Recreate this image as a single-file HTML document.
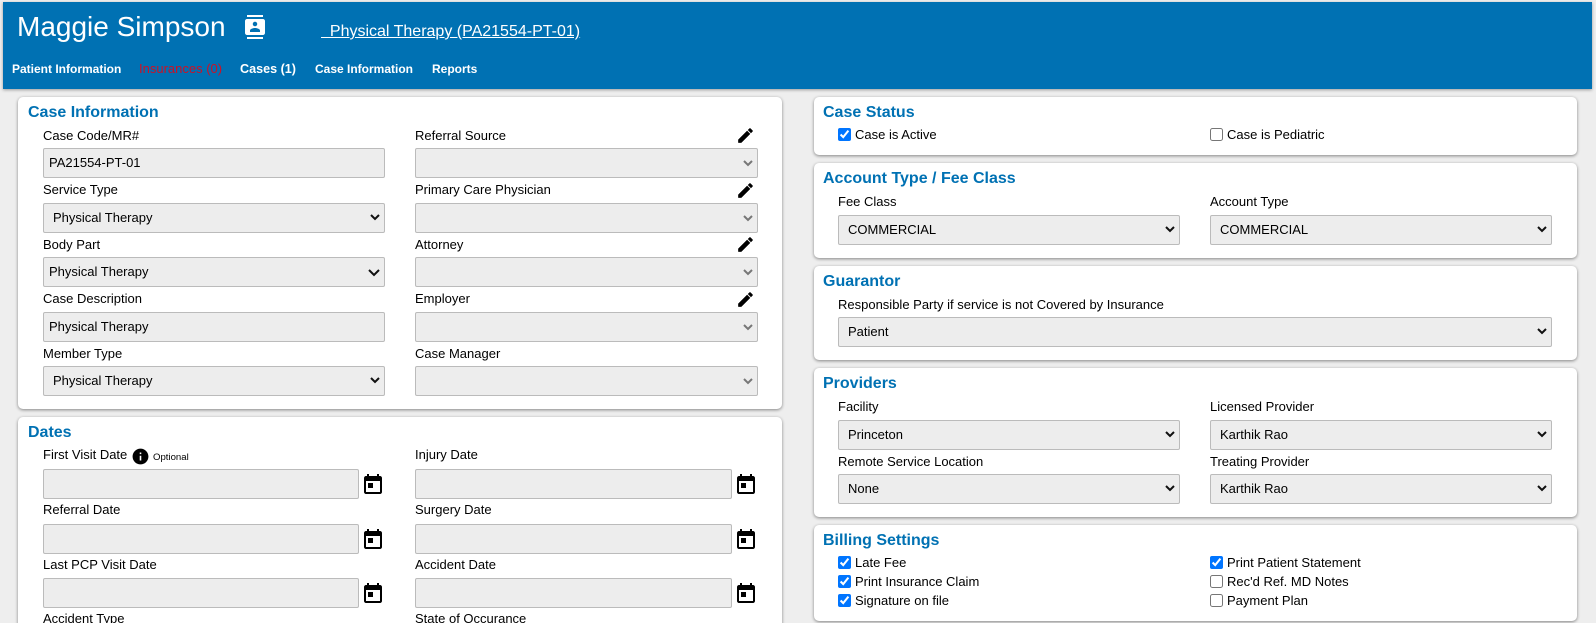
<!DOCTYPE html>
<html><head><meta charset="utf-8"><style>
html,body{margin:0;padding:0;width:1596px;height:623px;overflow:hidden;background:#eee;font-family:"Liberation Sans",Arial,sans-serif;color:#111}
*{box-sizing:border-box}
#root{position:relative;width:1596px;height:623px;overflow:hidden;background:#eee}
.a{position:absolute}
#hd{position:absolute;left:3px;top:2px;width:1589px;height:87px;background:#0071b3;box-shadow:0 1px 3px rgba(0,0,0,.35)}
.nav{position:absolute;top:60px;font-size:12px;font-weight:bold;color:#fff;line-height:18px;white-space:nowrap}
.card{position:absolute;background:#fff;border-radius:5px;box-shadow:0 1px 3px rgba(0,0,0,.45)}
.t{position:absolute;font-size:16px;font-weight:bold;color:#0071b3;line-height:20px;white-space:nowrap}
.l{position:absolute;font-size:13px;line-height:16px;white-space:nowrap;color:#000}
.i,select{position:absolute;height:30px;background:#ededed;border:1px solid #bbb;border-radius:2px;font:13px "Liberation Sans",Arial,sans-serif;color:#000;line-height:28px;padding:0 5px;margin:0;white-space:nowrap}
select{width:343px;padding-left:9px;-webkit-appearance:none;appearance:none}
select:disabled{opacity:1;color:#777}
input[type=checkbox]{position:absolute;width:13px;height:13px;margin:0;accent-color:#0075ff}
svg{position:absolute;fill:#000}
svg.e{stroke:#000;stroke-width:.5}
svg.c{fill:none;stroke:#111;stroke-width:2;pointer-events:none}
svg.d{fill:none;stroke:#777;stroke-width:2;pointer-events:none}
</style></head><body><div id="root">
<div id="hd"></div>
<div class="a" style="left:17px;top:10px;font-size:28px;line-height:34px;color:#fff;white-space:nowrap">Maggie Simpson</div>
<svg style="left:243px;top:15px;fill:#fff" width="24" height="24" viewBox="0 0 24 24"><path d="M20 0H4v2h16V0zM4 24h16v-2H4v2zM20 4H4c-1.1 0-2 .9-2 2v12c0 1.1.9 2 2 2h16c1.1 0 2-.9 2-2V6c0-1.1-.9-2-2-2zm-8 2.75c1.24 0 2.25 1.01 2.25 2.25s-1.01 2.25-2.25 2.25S9.75 10.24 9.75 9 10.76 6.75 12 6.75zM17 17H7v-1.5c0-1.67 3.33-2.5 5-2.5s5 .83 5 2.5V17z"/></svg>
<div class="a" style="left:321px;top:23px;font-size:16px;line-height:18px;color:#fff;text-decoration:underline;white-space:pre">  Physical Therapy (PA21554-PT-01)</div>
<div class="nav" style="left:12px">Patient Information</div>
<div class="nav" style="left:139px;color:#cc1126;font-weight:normal;font-size:13px">Insurances (0)</div>
<div class="nav" style="left:240px;font-size:12.6px">Cases (1)</div>
<div class="nav" style="left:315px">Case Information</div>
<div class="nav" style="left:432px">Reports</div>

<div class="card" style="left:18px;top:97px;width:764px;height:312px"></div>
<div class="t" style="left:28px;top:103px">Case Information</div>
<div class="l" style="left:43px;top:128px">Case Code/MR#</div>
<div class="i" style="left:43px;top:148px;width:342px">PA21554-PT-01</div>
<div class="l" style="left:43px;top:182px">Service Type</div>
<select style="left:43px;top:203px;width:342px"><option>Physical Therapy</option></select>
<svg class="c" style="left:370px;top:214px" width="10" height="7" viewBox="0 0 10 7"><path d="M1 1l4 4 4-4"/></svg>
<div class="l" style="left:43px;top:237px">Body Part</div>
<select style="left:43px;top:257px;width:342px;padding-left:5px"><option>Physical Therapy</option></select>
<svg class="c" style="left:368px;top:269px" width="12" height="8" viewBox="0 0 12 8"><path d="M1 1l5 5 5-5"/></svg>
<div class="l" style="left:43px;top:291px">Case Description</div>
<div class="i" style="left:43px;top:312px;width:342px">Physical Therapy</div>
<div class="l" style="left:43px;top:346px">Member Type</div>
<select style="left:43px;top:366px;width:342px"><option>Physical Therapy</option></select>
<svg class="c" style="left:370px;top:377px" width="10" height="7" viewBox="0 0 10 7"><path d="M1 1l4 4 4-4"/></svg>

<div class="l" style="left:415px;top:128px">Referral Source</div>
<select disabled style="left:415px;top:148px"><option></option></select>
<svg class="d" style="left:743px;top:160px" width="10" height="7" viewBox="0 0 10 7"><path d="M1 1l4 4 4-4"/></svg>
<div class="l" style="left:415px;top:182px">Primary Care Physician</div>
<select disabled style="left:415px;top:203px"><option></option></select>
<svg class="d" style="left:743px;top:215px" width="10" height="7" viewBox="0 0 10 7"><path d="M1 1l4 4 4-4"/></svg>
<div class="l" style="left:415px;top:237px">Attorney</div>
<select disabled style="left:415px;top:257px"><option></option></select>
<svg class="d" style="left:743px;top:269px" width="10" height="7" viewBox="0 0 10 7"><path d="M1 1l4 4 4-4"/></svg>
<div class="l" style="left:415px;top:291px">Employer</div>
<select disabled style="left:415px;top:312px"><option></option></select>
<svg class="d" style="left:743px;top:324px" width="10" height="7" viewBox="0 0 10 7"><path d="M1 1l4 4 4-4"/></svg>
<div class="l" style="left:415px;top:346px">Case Manager</div>
<select disabled style="left:415px;top:366px"><option></option></select>
<svg class="d" style="left:743px;top:378px" width="10" height="7" viewBox="0 0 10 7"><path d="M1 1l4 4 4-4"/></svg>
<svg class="e" style="left:736px;top:126px" width="19" height="19" viewBox="0 0 24 24"><path d="M3 17.25V21h3.75L17.81 9.94l-3.75-3.75L3 17.25zM20.71 7.04c.39-.39.39-1.02 0-1.41l-2.34-2.34c-.39-.39-1.02-.39-1.41 0l-1.83 1.83 3.75 3.75 1.83-1.83z"/></svg>
<svg class="e" style="left:736px;top:181px" width="19" height="19" viewBox="0 0 24 24"><path d="M3 17.25V21h3.75L17.81 9.94l-3.75-3.75L3 17.25zM20.71 7.04c.39-.39.39-1.02 0-1.41l-2.34-2.34c-.39-.39-1.02-.39-1.41 0l-1.83 1.83 3.75 3.75 1.83-1.83z"/></svg>
<svg class="e" style="left:736px;top:235px" width="19" height="19" viewBox="0 0 24 24"><path d="M3 17.25V21h3.75L17.81 9.94l-3.75-3.75L3 17.25zM20.71 7.04c.39-.39.39-1.02 0-1.41l-2.34-2.34c-.39-.39-1.02-.39-1.41 0l-1.83 1.83 3.75 3.75 1.83-1.83z"/></svg>
<svg class="e" style="left:736px;top:290px" width="19" height="19" viewBox="0 0 24 24"><path d="M3 17.25V21h3.75L17.81 9.94l-3.75-3.75L3 17.25zM20.71 7.04c.39-.39.39-1.02 0-1.41l-2.34-2.34c-.39-.39-1.02-.39-1.41 0l-1.83 1.83 3.75 3.75 1.83-1.83z"/></svg>

<div class="card" style="left:18px;top:417px;width:764px;height:230px"></div>
<div class="t" style="left:28px;top:423px">Dates</div>
<div class="l" style="left:43px;top:447px">First Visit Date</div>
<svg style="left:131px;top:447px" width="19" height="19" viewBox="0 0 24 24"><path d="M12 2C6.48 2 2 6.48 2 12s4.48 10 10 10 10-4.48 10-10S17.52 2 12 2zm1 15h-2v-6h2v6zm0-8h-2V7h2v2z"/></svg>
<div class="a" style="left:153px;top:451px;font-size:9.6px;line-height:14px;color:#000">Optional</div>
<div class="l" style="left:415px;top:447px">Injury Date</div>
<div class="i" style="left:43px;top:469px;width:316px"></div>
<div class="i" style="left:415px;top:469px;width:317px"></div>
<div class="l" style="left:43px;top:502px">Referral Date</div>
<div class="l" style="left:415px;top:502px">Surgery Date</div>
<div class="i" style="left:43px;top:524px;width:316px"></div>
<div class="i" style="left:415px;top:524px;width:317px"></div>
<div class="l" style="left:43px;top:557px">Last PCP Visit Date</div>
<div class="l" style="left:415px;top:557px">Accident Date</div>
<div class="i" style="left:43px;top:578px;width:316px"></div>
<div class="i" style="left:415px;top:578px;width:317px"></div>
<div class="l" style="left:43px;top:611px">Accident Type</div>
<div class="l" style="left:415px;top:611px">State of Occurance</div>
<svg style="left:361px;top:473px" width="24" height="24" viewBox="0 0 24 24"><path d="M19 3h-1V1h-2v2H8V1H6v2H5c-1.11 0-1.99.9-1.99 2L3 19c0 1.1.89 2 2 2h14c1.1 0 2-.9 2-2V5c0-1.1-.9-2-2-2zm0 16H5V8h14v11zM7 10h5v5H7z"/></svg>
<svg style="left:361px;top:528px" width="24" height="24" viewBox="0 0 24 24"><path d="M19 3h-1V1h-2v2H8V1H6v2H5c-1.11 0-1.99.9-1.99 2L3 19c0 1.1.89 2 2 2h14c1.1 0 2-.9 2-2V5c0-1.1-.9-2-2-2zm0 16H5V8h14v11zM7 10h5v5H7z"/></svg>
<svg style="left:361px;top:582px" width="24" height="24" viewBox="0 0 24 24"><path d="M19 3h-1V1h-2v2H8V1H6v2H5c-1.11 0-1.99.9-1.99 2L3 19c0 1.1.89 2 2 2h14c1.1 0 2-.9 2-2V5c0-1.1-.9-2-2-2zm0 16H5V8h14v11zM7 10h5v5H7z"/></svg>
<svg style="left:734px;top:473px" width="24" height="24" viewBox="0 0 24 24"><path d="M19 3h-1V1h-2v2H8V1H6v2H5c-1.11 0-1.99.9-1.99 2L3 19c0 1.1.89 2 2 2h14c1.1 0 2-.9 2-2V5c0-1.1-.9-2-2-2zm0 16H5V8h14v11zM7 10h5v5H7z"/></svg>
<svg style="left:734px;top:528px" width="24" height="24" viewBox="0 0 24 24"><path d="M19 3h-1V1h-2v2H8V1H6v2H5c-1.11 0-1.99.9-1.99 2L3 19c0 1.1.89 2 2 2h14c1.1 0 2-.9 2-2V5c0-1.1-.9-2-2-2zm0 16H5V8h14v11zM7 10h5v5H7z"/></svg>
<svg style="left:734px;top:582px" width="24" height="24" viewBox="0 0 24 24"><path d="M19 3h-1V1h-2v2H8V1H6v2H5c-1.11 0-1.99.9-1.99 2L3 19c0 1.1.89 2 2 2h14c1.1 0 2-.9 2-2V5c0-1.1-.9-2-2-2zm0 16H5V8h14v11zM7 10h5v5H7z"/></svg>

<div class="card" style="left:814px;top:97px;width:763px;height:58px"></div>
<div class="t" style="left:823px;top:103px">Case Status</div>
<input type="checkbox" checked style="left:838px;top:128px"><div class="l" style="left:855px;top:127px">Case is Active</div>
<input type="checkbox" style="left:1210px;top:128px"><div class="l" style="left:1227px;top:127px">Case is Pediatric</div>

<div class="card" style="left:814px;top:163px;width:763px;height:95px"></div>
<div class="t" style="left:823px;top:169px">Account Type / Fee Class</div>
<div class="l" style="left:838px;top:194px">Fee Class</div>
<div class="l" style="left:1210px;top:194px">Account Type</div>
<select style="left:838px;top:215px;width:342px"><option>COMMERCIAL</option></select>
<svg class="c" style="left:1165px;top:226px" width="10" height="7" viewBox="0 0 10 7"><path d="M1 1l4 4 4-4"/></svg>
<select style="left:1210px;top:215px;width:342px"><option>COMMERCIAL</option></select>
<svg class="c" style="left:1537px;top:226px" width="10" height="7" viewBox="0 0 10 7"><path d="M1 1l4 4 4-4"/></svg>

<div class="card" style="left:814px;top:266px;width:763px;height:94px"></div>
<div class="t" style="left:823px;top:272px">Guarantor</div>
<div class="l" style="left:838px;top:297px">Responsible Party if service is not Covered by Insurance</div>
<select style="left:838px;top:317px;width:714px"><option>Patient</option></select>
<svg class="c" style="left:1537px;top:328px" width="10" height="7" viewBox="0 0 10 7"><path d="M1 1l4 4 4-4"/></svg>

<div class="card" style="left:814px;top:368px;width:763px;height:149px"></div>
<div class="t" style="left:823px;top:374px">Providers</div>
<div class="l" style="left:838px;top:399px">Facility</div>
<div class="l" style="left:1210px;top:399px">Licensed Provider</div>
<select style="left:838px;top:420px;width:342px"><option>Princeton</option></select>
<svg class="c" style="left:1165px;top:431px" width="10" height="7" viewBox="0 0 10 7"><path d="M1 1l4 4 4-4"/></svg>
<select style="left:1210px;top:420px;width:342px"><option>Karthik Rao</option></select>
<svg class="c" style="left:1537px;top:431px" width="10" height="7" viewBox="0 0 10 7"><path d="M1 1l4 4 4-4"/></svg>
<div class="l" style="left:838px;top:454px">Remote Service Location</div>
<div class="l" style="left:1210px;top:454px">Treating Provider</div>
<select style="left:838px;top:474px;width:342px"><option>None</option></select>
<svg class="c" style="left:1165px;top:485px" width="10" height="7" viewBox="0 0 10 7"><path d="M1 1l4 4 4-4"/></svg>
<select style="left:1210px;top:474px;width:342px"><option>Karthik Rao</option></select>
<svg class="c" style="left:1537px;top:485px" width="10" height="7" viewBox="0 0 10 7"><path d="M1 1l4 4 4-4"/></svg>

<div class="card" style="left:814px;top:525px;width:763px;height:96px"></div>
<div class="t" style="left:823px;top:531px">Billing Settings</div>
<input type="checkbox" checked style="left:838px;top:556px"><div class="l" style="left:855px;top:555px">Late Fee</div>
<input type="checkbox" checked style="left:838px;top:575px"><div class="l" style="left:855px;top:574px">Print Insurance Claim</div>
<input type="checkbox" checked style="left:838px;top:594px"><div class="l" style="left:855px;top:593px">Signature on file</div>
<input type="checkbox" checked style="left:1210px;top:556px"><div class="l" style="left:1227px;top:555px">Print Patient Statement</div>
<input type="checkbox" style="left:1210px;top:575px"><div class="l" style="left:1227px;top:574px">Rec'd Ref. MD Notes</div>
<input type="checkbox" style="left:1210px;top:594px"><div class="l" style="left:1227px;top:593px">Payment Plan</div>
</div></body></html>
